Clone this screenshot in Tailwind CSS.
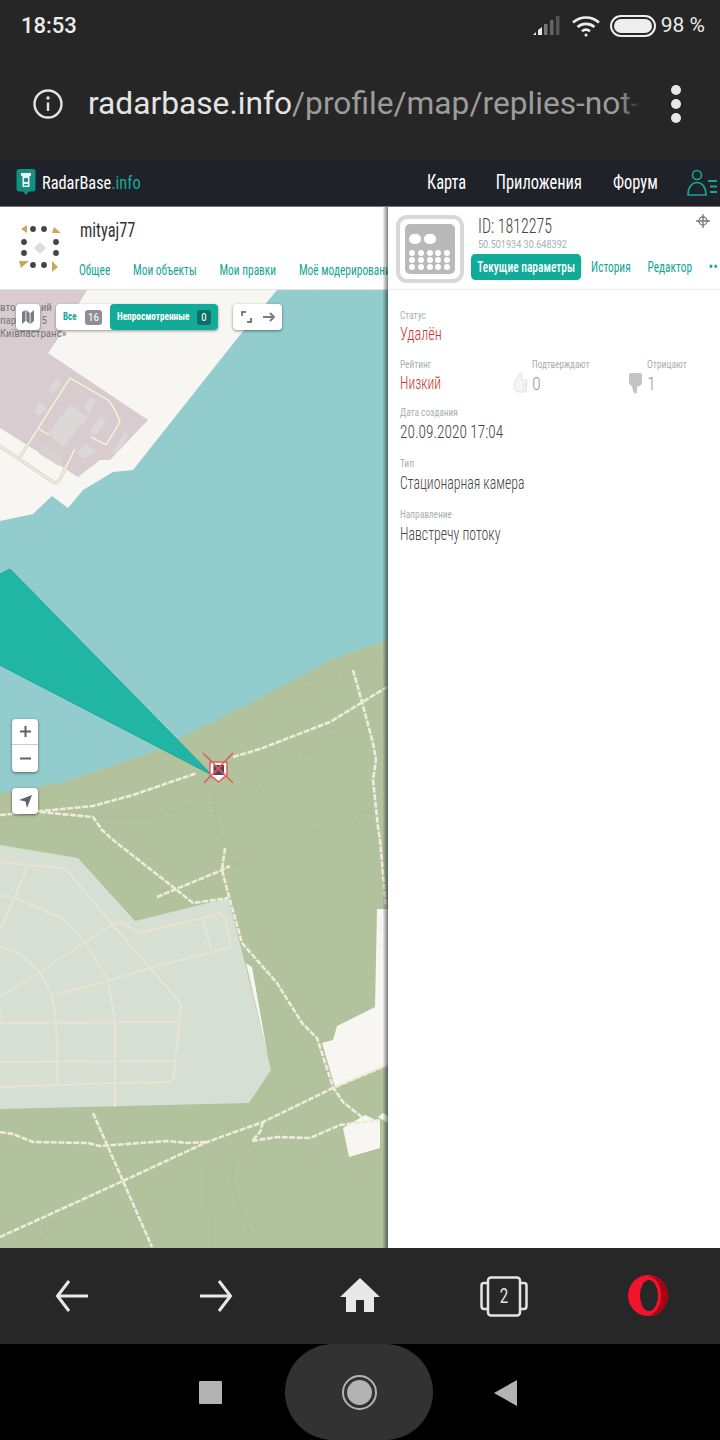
<!DOCTYPE html>
<html lang="ru">
<head>
    <meta charset="UTF-8"/>
    <meta name="viewport" content="width=device-width, initial-scale=1.0"/>
    <title>RadarBase.info</title>
    <script src="https://cdn.jsdelivr.net/npm/@tailwindcss/browser@4"></script>
</head>
<body class="bg-black font-['Roboto',sans-serif]">
<div class="w-[720px] h-[1440px] flex flex-col overflow-hidden">

    <!-- status bar -->
    <div class="h-[46px] pt-[5px] bg-[#262626] flex items-center justify-between pl-[21px] pr-[15px] text-[#ececec]">
        <span class="text-[22px] font-medium">18:53</span>
        <div class="flex items-center">
            <svg width="28" height="22" viewBox="0 0 28 22" class="mr-[12px]">
                <path d="M1 20L4 17V20Z" fill="#e8e8e8"/>
                <path d="M6 15L10 12V20H6Z" fill="#e8e8e8"/>
                <rect x="12" y="9" width="3.500" height="11" fill="#777"/>
                <rect x="18" y="5" width="3.500" height="15" fill="#666"/>
                <rect x="24" y="1" width="3.500" height="19" fill="#555"/>
            </svg>
            <svg width="28" height="22" viewBox="0 0 28 22" class="mr-[10px]" fill="none" stroke="#eee" stroke-width="2.600">
                <path d="M1 7.500C8.500 .8 19.500 .8 27 7.500"/>
                <path d="M5.500 12C10.500 7.800 17.500 7.800 22.500 12"/>
                <path d="M10 16.200C12.500 14.200 15.500 14.200 18 16.200"/>
                <circle cx="14" cy="20" r="1.500" fill="#eee" stroke="none"/>
            </svg>
            <div class="w-[46px] h-[22px] rounded-full border-2 border-[#eee] p-[2px] mr-[5px]">
                <div class="w-full h-full rounded-full bg-[#eee]"></div>
            </div>
            <span class="text-[21px]">98 %</span>
        </div>
    </div>

    <!-- address bar -->
    <div class="h-[114px] pt-[2px] bg-[#262626] flex items-center relative">
        <svg width="32" height="32" viewBox="0 0 32 32" class="ml-[32px] mr-[24px]" fill="none" stroke="#e4e4e4" stroke-width="2.400">
            <circle cx="16" cy="16" r="13.500"/>
            <path d="M16 14.500V23"/>
            <circle cx="16" cy="10" r="1.700" fill="#e4e4e4" stroke="none"/>
        </svg>
        <div class="w-[552px] overflow-hidden whitespace-nowrap text-[31.7px] text-[#e4e4e4]">radarbase.info<span class="text-[#9c9c9c]">/profile/map/replies-not-viewed</span></div>
        <div class="absolute left-[620px] top-[30px] w-[20px] h-[54px] bg-gradient-to-r from-transparent to-[#262626]"></div>
        <div class="absolute right-[39px] top-[39px] flex flex-col gap-[4px]">
            <span class="w-[10px] h-[10px] rounded-full bg-[#e8e8e8]"></span>
            <span class="w-[10px] h-[10px] rounded-full bg-[#e8e8e8]"></span>
            <span class="w-[10px] h-[10px] rounded-full bg-[#e8e8e8]"></span>
        </div>
    </div>

    <!-- site header -->
    <div class="h-[47px] bg-[#1f2229] flex items-center pl-[16px] text-white border-b border-[#777] font-stretch-condensed">
        <svg width="20" height="32" viewBox="0 0 20 32" class="mr-[6px] -mt-[2px] shrink-0">
            <path d="M3 3H17A2.500 2.500 0 0 1 19.500 5.500V23A2.500 2.500 0 0 1 17 25.500H13L10 29L7 25.500H3A2.500 2.500 0 0 1 .5 23V5.500A2.500 2.500 0 0 1 3 3Z" fill="#138f83"/>
            <path d="M5 7H15V10H13.500V21H6.500V10H5Z" fill="#f4f4f4"/>
            <circle cx="10" cy="14" r="2.300" fill="#138f83"/>
            <path d="M8 18H12V19.500H8Z" fill="#138f83"/>
        </svg>
        <span class="text-[19px] origin-left scale-x-[.86] whitespace-nowrap">RadarBase<span class="text-[#17a999]">.info</span></span>
        <nav class="flex items-center ml-auto">
            <div class="flex text-[21px] mr-[29px] origin-right scale-x-[.78] whitespace-nowrap">
                <span class="mr-[38px]">Карта</span>
                <span class="mr-[40px]">Приложения</span>
                <span>Форум</span>
            </div>
            <svg width="33" height="28" viewBox="0 0 33 28" fill="none" stroke="#14a898" stroke-width="1.600">
                <circle cx="10" cy="6" r="4.500"/>
                <path d="M1 26C1 18 5 13.500 10 13.500C15 13.500 19 18 19 26Z"/>
                <path d="M21 12H30M23 17.500H30M23 23H30" stroke-width="2.200"/>
            </svg>
        </nav>
    </div>

    <!-- main -->
    <div class="h-[1041px] flex relative font-stretch-condensed">
        <!-- left column -->
        <div class="w-[388px] flex flex-col relative overflow-hidden">
            <div class="h-[83px] bg-white border-b border-[#e4e4e4] flex shrink-0">
                <svg width="50" height="50" viewBox="0 0 50 50" class="ml-[15px] mt-[17px] shrink-0">
                    <g fill="#444"><circle cx="18" cy="5" r="2.900"/><circle cx="29" cy="5" r="2.900"/><circle cx="9" cy="18" r="2.900"/><circle cx="41" cy="18" r="2.900"/><circle cx="9" cy="29" r="2.900"/><circle cx="41" cy="29" r="2.900"/><circle cx="18" cy="41" r="2.900"/><circle cx="29" cy="41" r="2.900"/></g>
                    <g fill="#c9a866"><path d="M12 1V9L6 5Z"/><path d="M39 3L46 9H37Z"/><path d="M4 37H14L6 44Z"/><path d="M37 37L43 43L37 48Z"/></g>
                    <path d="M25 18L31 24L25 30L19 24Z" fill="#dcdcdc"/>
                </svg>
                <div class="ml-[15px] flex flex-col min-w-0">
                    <span class="text-[21px] text-[#333] mt-[9px] leading-[28px] origin-left scale-x-[.78]">mityaj77</span>
                    <div class="flex text-[15px] text-[#12a594] mt-[15px] -ml-[1px] whitespace-nowrap origin-left scale-x-[.76]">
                        <span class="mr-[30px]">Общее</span>
                        <span class="mr-[30px]">Мои объекты</span>
                        <span class="mr-[30px]">Мои правки</span>
                        <span>Моё модерирование</span>
                    </div>
                </div>
            </div>

            <!-- map -->
            <div class="flex-1 relative bg-[#92cccc]">
                <svg width="388" height="958" viewBox="0 290 388 958" class="block" fill="none">
                    <path d="M0 290H277L236 340L133 470L113 472L83 490L68 508L52 496L33 514L0 521Z" fill="#f7f6f2"/>
                    <path d="M0 290H87L57 340L48 353L148 420L110 460L100 460L78 477L0 428Z" fill="#d9ccd0"/>
                    <g fill="#dcd8d8">
                        <path d="M70 405L88 417L63 447L48 434Z"/>
                        <path d="M86 444L96 451L84 459L77 453Z"/>
                        <path d="M43 445L62 458L59 466L38 453Z" fill="#d6d2d2"/>
                        <path d="M56 379L61 383L53 394L48 390Z"/>
                        <path d="M39 402L47 408L39 416L34 412Z"/>
                        <path d="M90 396L96 400L89 413L85 408Z"/>
                        <path d="M100 416L106 420L96 435L90 432Z"/>
                        <path d="M125 433L128 436L116 454L113 451Z"/>
                    </g>
                    <path d="M0 446L53 482Q58 485 62 475L75 449M20 457L70 378L108 400Q114 406 120 422L106 445L91 437M39 429L49 435" stroke="#cfcab5" stroke-width="3.200" stroke-linejoin="round"/>
                    <path d="M0 446L53 482Q58 485 62 475L75 449M20 457L70 378L108 400Q114 406 120 422L106 445L91 437M39 429L49 435" stroke="#efeddc" stroke-width="2"/>

                    <!-- forest and town -->
                    <path d="M0 793L60 783L150 753L257 700L330 660L387 640V1248H0Z" fill="#b1c29d"/>
                    <path d="M0 845L78 858L135 921L228 898L245 963L271 1070L249 1103L0 1109Z" fill="#d5dfd3"/>
                    <path d="M246 963L252 967L268 1057Z" fill="#f7f6f2"/>
                    <path d="M377 909H388V1065L335 1087L322 1043L333 1040L337 1026L375 1007Z" fill="#f7f6f2"/>
                    <path d="M343 1128L365 1115L380 1122V1148L349 1157Z" fill="#f7f6f2"/>
                    <path d="M378 1117L383 1113L388 1116V1123Z" fill="#f7f6f2"/>

                    <g stroke="#e9e3d0" stroke-width="2" stroke-linejoin="round">
                        <path d="M0 862L28 865L63 868L68 872L113 925L150 968L178 1000L181 1007L175 1063L174 1078L170 1082L115 1083L58 1085L0 1087"/>
                        <path d="M28 865L15 897L0 930"/>
                        <path d="M0 896L15 898L62 918L85 942L108 980L115 1022V1107"/>
                        <path d="M0 997L40 972L85 942L113 924L123 922L138 933L203 918L220 913L225 917L231 947L150 968L108 981L53 995"/>
                        <path d="M0 947L20 954L40 972L52 995L56 1022L58 1085"/>
                        <path d="M0 1023L178 1022M0 1062L175 1061M203 918L211 950M0 1010L3 1023"/>
                    </g>

                    <g stroke="#a89f84" stroke-width="1" stroke-dasharray="1 3" opacity=".7">
                        <path d="M230 866L320 830L375 807"/>
                        <path d="M213 780L217 830L225 848"/>
                        <path d="M93 817H150L243 793L260 783L330 737L367 722M373 745L387 740"/>
                        <path d="M250 710L330 680L385 653"/>
                        <path d="M200 1145L207 1170L206 1208L212 1213V1247"/>
                        <path d="M252 1141L233 1163L232 1185L255 1247"/>
                        <path d="M37 1220L48 1234"/>
                    </g>

                    <g stroke="#f0ebdc" stroke-width="2.600" stroke-dasharray="6 1.500" stroke-linejoin="round">
                        <path d="M0 815L93 806L133 795L197 773M233 757L260 749L330 722L387 687"/>
                        <path d="M40 812L93 817L102 830L113 840L173 887L193 903L228 898"/>
                        <path d="M157 897L222 870L230 866"/>
                        <path d="M225 848L222 870L228 893L242 943L277 983L302 1023L317 1038L333 1087L343 1102L363 1118"/>
                        <path d="M353 670L362 702L373 743L376 760L373 780L378 827L380 840L386 907"/>
                        <path d="M0 1237L123 1181L207 1142L263 1122L333 1088L387 1065"/>
                        <path d="M93 1113L123 1181L152 1247"/>
                        <path d="M0 1132L13 1134L33 1142L88 1143L100 1146L167 1141L187 1143L207 1142"/>
                        <path d="M263 1122L260 1132L252 1141L277 1137L310 1138L340 1125L380 1120"/>
                    </g>

                    <!-- sector -->
                    <path d="M10 569L212 775L-10 660V579Z" fill="#21b5a3" stroke="#1ea899" stroke-width="1"/>

                    <!-- marker -->
                    <path d="M210 762H227V776L223 778L218.500 782L214 778L210 776Z" fill="#fff" stroke="#e65a5a" stroke-width="1.500" stroke-linejoin="round"/>
                    <rect x="213.500" y="765" width="10.500" height="10" fill="#3c4a63"/>
                    <path d="M214.500 766L223 774M223 766L214.500 774" stroke="#b93a48" stroke-width="1.300"/>
                    <path d="M203 753L233 783M233 753L204 783" stroke="#e65a5a" stroke-width="1.500"/>
                </svg>

                <!-- map text under the buttons -->
                <div class="absolute left-0 top-[11px] text-[11px] leading-[13px] text-[#777] whitespace-nowrap">
                    <div>вто&nbsp; &nbsp; &nbsp; &nbsp; &nbsp; ий</div>
                    <div>пар&nbsp; &nbsp; &nbsp; &nbsp; &nbsp; 5</div>
                    <div>Київпастранс»</div>
                </div>

                <!-- buttons over the map -->
                <div class="absolute left-[16px] top-[14px] w-[24px] h-[26px] bg-white rounded-[4px] shadow-[0_1px_3px_rgba(0,0,0,.45)] flex items-center justify-center">
                    <svg width="12" height="14" viewBox="0 0 12 14" fill="#7b7d86"><path d="M0 2L3.500 0V11L0 14ZM4.300 0L7.700 3V14L4.300 11ZM8.500 3L12 0V11L8.500 14Z"/></svg>
                </div>
                <div class="absolute left-[56px] top-[14px] h-[26px] bg-white rounded-[4px] shadow-[0_1px_3px_rgba(0,0,0,.4)] flex items-center text-[11px] whitespace-nowrap">
                    <span class="block w-[14px] ml-[7px] text-[#12a594] font-bold origin-left scale-x-[.82]">Все</span>
                    <span class="w-[17px] h-[15px] bg-[#8d8f97] text-white rounded-[3px] text-center leading-[15px] ml-[8px] mr-[8px]">16</span>
                    <div class="h-[26px] bg-[#12ab9a] rounded-[4px] flex items-center text-white pl-[7px] pr-[7px] font-bold">
                        <span class="block w-[72px] origin-left scale-x-[.84]">Непросмотренные</span>
                        <span class="w-[14px] h-[15px] bg-[#0d6f66] rounded-[3px] text-center leading-[15px] ml-[8px] font-normal">0</span>
                    </div>
                </div>
                <div class="absolute left-[233px] top-[14px] w-[49px] h-[26px] bg-white rounded-[4px] shadow-[0_1px_3px_rgba(0,0,0,.45)] flex items-center justify-center gap-[11px]">
                    <svg width="11" height="12" viewBox="0 0 11 12" fill="none" stroke="#7b7d86" stroke-width="2"><path d="M1 5V1H5M10 7V11H6"/></svg>
                    <svg width="12" height="10" viewBox="0 0 12 10" fill="none" stroke="#7b7d86" stroke-width="2"><path d="M0 5H10.500M7 1L11 5L7 9"/></svg>
                </div>
                <div class="absolute left-[12px] top-[429px] w-[26px] h-[53px] bg-white rounded-[4px] shadow-[0_1px_3px_rgba(0,0,0,.5)] flex flex-col text-[#5f616b]">
                    <div class="h-[26px] border-b border-[#ccc] flex items-center justify-center">
                        <svg width="11" height="11" viewBox="0 0 11 11" stroke="currentColor" stroke-width="2"><path d="M0 5.500H11M5.500 0V11"/></svg>
                    </div>
                    <div class="flex-1 flex items-center justify-center">
                        <svg width="11" height="3" viewBox="0 0 11 3" stroke="currentColor" stroke-width="2"><path d="M0 1.500H11"/></svg>
                    </div>
                </div>
                <div class="absolute left-[12px] top-[498px] w-[26px] h-[26px] bg-white rounded-[4px] shadow-[0_1px_3px_rgba(0,0,0,.5)] flex items-center justify-center">
                    <svg width="13" height="13" viewBox="0 0 13 13" fill="#5f616b"><path d="M13 0L8 13L6.500 6.500L0 5Z"/></svg>
                </div>
            </div>

            <!-- shadow of the side panel -->
            <div class="absolute top-0 bottom-0 right-0 w-[5px] bg-gradient-to-r from-black/5 to-black/50"></div>
        </div>

        <!-- side panel -->
        <div class="w-[332px] bg-white flex flex-col overflow-hidden">
            <div class="h-[83px] border-b border-[#ececec] flex shrink-0 relative">
                <div class="w-[68px] h-[68px] rounded-[11px] border-[4px] border-[#d8d8d8] ml-[8px] mt-[8px] shrink-0 flex items-center justify-center">
                    <div class="w-[50px] h-[50px] rounded-[5px] bg-[#b9b9b9] grid grid-cols-5 gap-x-[2px] gap-y-[1px] p-[4px] content-end">
                        <span class="col-span-5 h-[14px] flex gap-[3px] mb-[1px]"><span class="w-[12px] h-[10px] rounded-full bg-white"></span><span class="w-[12px] h-[10px] rounded-full bg-white"></span></span>
                        <span class="w-[6px] h-[6px] rounded-full bg-white"></span><span class="w-[6px] h-[6px] rounded-full bg-white"></span><span class="w-[6px] h-[6px] rounded-full bg-white"></span><span class="w-[6px] h-[6px] rounded-full bg-white"></span><span class="w-[6px] h-[6px] rounded-full bg-white"></span>
                        <span class="w-[6px] h-[6px] rounded-full bg-white"></span><span class="w-[6px] h-[6px] rounded-full bg-white"></span><span class="w-[6px] h-[6px] rounded-full bg-white"></span><span class="w-[6px] h-[6px] rounded-full bg-white"></span><span class="w-[6px] h-[6px] rounded-full bg-white"></span>
                        <span class="w-[6px] h-[6px] rounded-full bg-white"></span><span class="w-[6px] h-[6px] rounded-full bg-white"></span><span class="w-[6px] h-[6px] rounded-full bg-white"></span><span class="w-[6px] h-[6px] rounded-full bg-white"></span><span class="w-[6px] h-[6px] rounded-full bg-white"></span>
                    </div>
                </div>
                <div class="flex flex-col ml-[7px] min-w-0">
                    <span class="text-[21px] leading-[26px] text-[#444] mt-[6px] ml-[7px] font-light origin-left scale-x-[.76]">ID: 1812275</span>
                    <span class="text-[10px] leading-[12px] text-[#a9adb5] ml-[7px] font-stretch-normal whitespace-nowrap origin-left scale-x-[.91]">50.501934 30.648392</span>
                    <div class="flex items-center text-[15px] text-[#12a594] mt-[3px] whitespace-nowrap origin-left scale-x-[.76]">
                        <span class="w-[145px] h-[26px] leading-[26px] bg-[#12ab9a] text-white text-center rounded-[5px] font-medium shrink-0">Текущие параметры</span>
                        <span class="ml-[13px]">История</span>
                        <span class="ml-[22px]">Редактор</span>
                        <span class="ml-[22px] font-bold tracking-[1px]">••</span>
                    </div>
                </div>
                <svg width="14" height="14" viewBox="0 0 14 14" class="absolute right-[10px] top-[7px]" fill="none" stroke="#777" stroke-width="1.300">
                    <circle cx="7" cy="7" r="4"/>
                    <path d="M7 0V14M0 7H14"/>
                </svg>
            </div>
            <div class="pl-[12px] text-[#444] whitespace-nowrap">
                <div class="text-[11px] leading-[13px] text-[#a9adb5] mt-[19px] origin-left scale-x-[.85]">Статус</div>
                <div class="text-[19px] leading-[26px] text-[#c9352c] -mt-[1px] font-light origin-left scale-x-[.75]">Удалён</div>
                <div class="flex mt-[11px]">
                    <div class="w-[132px]">
                        <div class="text-[11px] leading-[13px] text-[#a9adb5] origin-left scale-x-[.85]">Рейтинг</div>
                        <div class="text-[18px] leading-[26px] text-[#c9352c] -mt-[1px] font-light origin-left scale-x-[.76]">Низкий</div>
                    </div>
                    <div class="w-[115px]">
                        <div class="text-[11px] leading-[13px] text-[#a9adb5] origin-left scale-x-[.83]">Подтверждают</div>
                        <div class="flex items-center h-[26px] -mt-[1px] -ml-[19px]">
                            <svg width="15" height="22" viewBox="0 0 15 22" fill="#f5f5f5" stroke="#e2e2e2" stroke-width="1"><path d="M7 1Q9 1 9 4L8.500 8H13Q14.500 8 14 10L13 20H5Q1 19 1 14V11ZM9 12H13M9 15H13M9 18H12"/></svg>
                            <span class="text-[18px] text-[#9a9ca2] ml-[4px] font-light">0</span>
                        </div>
                    </div>
                    <div>
                        <div class="text-[11px] leading-[13px] text-[#a9adb5] origin-left scale-x-[.87]">Отрицают</div>
                        <div class="flex items-center h-[26px] -mt-[1px] -ml-[19px]">
                            <svg width="15" height="22" viewBox="0 0 15 22" fill="#c4c4c4"><path d="M1 3Q1 1 3 1H12Q14 1 14 3V11Q14 13 11 14L9 15V21Q6 22 5 19L4 14Q1 13 1 11Z"/></svg>
                            <span class="text-[18px] text-[#9a9ca2] ml-[4px] font-light">1</span>
                        </div>
                    </div>
                </div>
                <div class="text-[11px] leading-[13px] text-[#a9adb5] mt-[10px] origin-left scale-x-[.85]">Дата создания</div>
                <div class="text-[18px] leading-[26px] font-light origin-left scale-x-[.85]">20.09.2020 17:04</div>
                <div class="text-[11px] leading-[13px] text-[#a9adb5] mt-[12px] origin-left scale-x-[.85]">Тип</div>
                <div class="text-[18px] leading-[26px] font-light origin-left scale-x-[.765]">Стационарная камера</div>
                <div class="text-[11px] leading-[13px] text-[#a9adb5] mt-[12px] origin-left scale-x-[.85]">Направление</div>
                <div class="text-[18px] leading-[26px] font-light origin-left scale-x-[.77]">Навстречу потоку</div>
            </div>
        </div>
    </div>

    <!-- browser toolbar -->
    <div class="h-[96px] bg-[#272727] flex items-center relative shrink-0">
        <svg width="34" height="34" viewBox="0 0 34 34" class="absolute left-[55px] top-[31px]" fill="none" stroke="#e8e8e8" stroke-width="3"><path d="M33 17H2M14 2L2.500 17L14 32"/></svg>
        <svg width="34" height="34" viewBox="0 0 34 34" class="absolute left-[199px] top-[31px]" fill="none" stroke="#e8e8e8" stroke-width="3"><path d="M1 17H32M20 2L31.500 17L20 32"/></svg>
        <svg width="40" height="36" viewBox="0 0 40 36" class="absolute left-[340px] top-[30px]" fill="#e8e8e8"><path d="M20 0L40 19H34V34H24V22H16V34H6V19H0Z"/></svg>
        <svg width="48" height="42" viewBox="0 0 48 42" class="absolute left-[480px] top-[28px]" fill="none" stroke="#e4e4e4" stroke-width="2.500">
            <rect x="8" y="1.500" width="32" height="38" rx="3"/>
            <path d="M8 7H4Q1.500 7 1.500 9.500V30Q1.500 33 4 33H8M40 7H44Q46.500 7 46.500 9.500V30Q46.500 33 44 33H40"/>
        </svg>
        <span class="absolute left-[480px] w-[48px] text-center top-[35px] text-[20px] leading-[26px] text-[#e4e4e4] scale-x-[.75]">2</span>
        <svg width="40" height="42" viewBox="0 0 40 42" class="absolute left-[628px] top-[27px]">
            <ellipse cx="20" cy="20.500" rx="20" ry="20.500" fill="#f0142f"/>
            <ellipse cx="21" cy="20.500" rx="9" ry="15.500" fill="#272727"/>
            <path d="M21 1C32 1 40 10 40 20.500C40 31 32 40 21 40C29 38 33 30 33 20.500C33 11 29 3 21 1Z" fill="#a70014"/>
        </svg>
    </div>

    <!-- android nav -->
    <div class="h-[96px] bg-black relative shrink-0">
        <div class="absolute left-[285px] top-0 w-[148px] h-[96px] bg-[#323232] rounded-[60px]"></div>
        <div class="absolute left-[199px] top-[37px] w-[23px] h-[23px] rounded-[1px] bg-[#b3b3b3]"></div>
        <div class="absolute left-[342px] top-[31px] w-[35px] h-[35px] rounded-full border-[2px] border-[#b3b3b3] flex items-center justify-center">
            <div class="w-[25px] h-[25px] rounded-full bg-[#b3b3b3]"></div>
        </div>
        <svg width="24" height="26" viewBox="0 0 24 26" class="absolute left-[494px] top-[36px]" fill="#b3b3b3"><path d="M23 0V26L0 13Z"/></svg>
    </div>
</div>
</body>
</html>
